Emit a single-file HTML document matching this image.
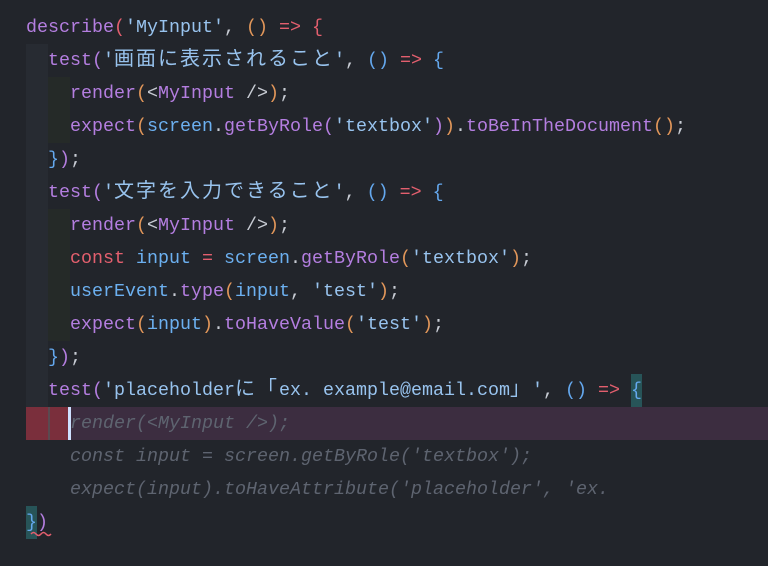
<!DOCTYPE html>
<html><head><meta charset="utf-8"><style>
html,body{margin:0;padding:0;background:#22252b;width:768px;height:566px;overflow:hidden}
.l{position:absolute;left:0;height:33px;line-height:33px;white-space:pre;font-family:"Liberation Mono","Noto Sans CJK JP",monospace;font-size:18.33px;color:#c8ccd4}
.j{font-size:20px;letter-spacing:2px}
.k{color:#b47ee0}.s{color:#98c3ee}.o{color:#e2975a}.r{color:#e35f6e}.b{color:#64a8ee}.v{color:#6cb0f0}.p{color:#c8ccd4}.c{color:#5e6470;font-style:italic}
.g{position:absolute}
</style></head><body>
<div class="g" style="left:26px;top:44px;width:22px;height:363px;background:#272b32"></div>
<div class="g" style="left:48px;top:77px;width:22px;height:66px;background:#252a28"></div>
<div class="g" style="left:48px;top:209px;width:22px;height:132px;background:#252a28"></div>
<div class="g" style="left:26px;top:407px;width:742px;height:33px;background:#3c2d40"></div>
<div class="g" style="left:26px;top:407px;width:42px;height:33px;background:#7a2f3c"></div>
<div class="g" style="left:48px;top:407px;width:2px;height:33px;background:#5a4a50"></div>
<div class="g" style="left:68px;top:407px;width:3px;height:33px;background:#cfe0ff"></div>
<div class="g" style="left:26px;top:506px;width:11px;height:33px;background:#275458"></div>
<div class="g" style="left:631px;top:374px;width:11px;height:33px;background:#275458"></div>

<div class="l" style="top:11px;left:26px"><span class="k">describe</span><span class="r">(</span><span class="s">'MyInput'</span>, <span class="o">()</span> <span class="r">=&gt;</span> <span class="r">{</span></div>
<div class="l" style="top:44px;left:48px"><span class="k">test</span><span class="k">(</span><span class="s">'<span class="j">画面に表示されること</span>'</span>, <span class="b">()</span> <span class="r">=&gt;</span> <span class="b">{</span></div>
<div class="l" style="top:77px;left:70px"><span class="k">render</span><span class="o">(</span>&lt;<span class="k">MyInput</span> /&gt;<span class="o">)</span>;</div>
<div class="l" style="top:110px;left:70px"><span class="k">expect</span><span class="o">(</span><span class="v">screen</span>.<span class="k">getByRole</span><span class="k">(</span><span class="s">'textbox'</span><span class="k">)</span><span class="o">)</span>.<span class="k">toBeInTheDocument</span><span class="o">()</span>;</div>
<div class="l" style="top:143px;left:48px"><span class="b">}</span><span class="k">)</span>;</div>
<div class="l" style="top:176px;left:48px"><span class="k">test</span><span class="k">(</span><span class="s">'<span class="j">文字を入力できること</span>'</span>, <span class="b">()</span> <span class="r">=&gt;</span> <span class="b">{</span></div>
<div class="l" style="top:209px;left:70px"><span class="k">render</span><span class="o">(</span>&lt;<span class="k">MyInput</span> /&gt;<span class="o">)</span>;</div>
<div class="l" style="top:242px;left:70px"><span class="r">const</span> <span class="v">input</span> <span class="r">=</span> <span class="v">screen</span>.<span class="k">getByRole</span><span class="o">(</span><span class="s">'textbox'</span><span class="o">)</span>;</div>
<div class="l" style="top:275px;left:70px"><span class="v">userEvent</span>.<span class="k">type</span><span class="o">(</span><span class="v">input</span>, <span class="s">'test'</span><span class="o">)</span>;</div>
<div class="l" style="top:308px;left:70px"><span class="k">expect</span><span class="o">(</span><span class="v">input</span><span class="o">)</span>.<span class="k">toHaveValue</span><span class="o">(</span><span class="s">'test'</span><span class="o">)</span>;</div>
<div class="l" style="top:341px;left:48px"><span class="b">}</span><span class="k">)</span>;</div>
<div class="l" style="top:374px;left:48px"><span class="k">test</span><span class="k">(</span><span class="s">'placeholder<span class="j">に「</span>ex. example@email.com<span class="j">」</span>'</span>, <span class="b">()</span> <span class="r">=&gt;</span> <span class="b">{</span></div>
<div class="l c" style="top:407px;left:70px">render(&lt;MyInput /&gt;);</div>
<div class="l c" style="top:440px;left:70px">const input = screen.getByRole('textbox');</div>
<div class="l c" style="top:473px;left:70px">expect(input).toHaveAttribute('placeholder', 'ex.</div>
<div class="l" style="top:506px;left:26px"><span class="b">}</span><span class="k">)</span></div>
<svg class="g" style="left:30px;top:531px" width="24" height="6"><path d="M1 3 Q3.5 0 6 3 T11 3 T16 3 T21 3" stroke="#e35f6e" stroke-width="1.5" fill="none"/></svg>
</body></html>
